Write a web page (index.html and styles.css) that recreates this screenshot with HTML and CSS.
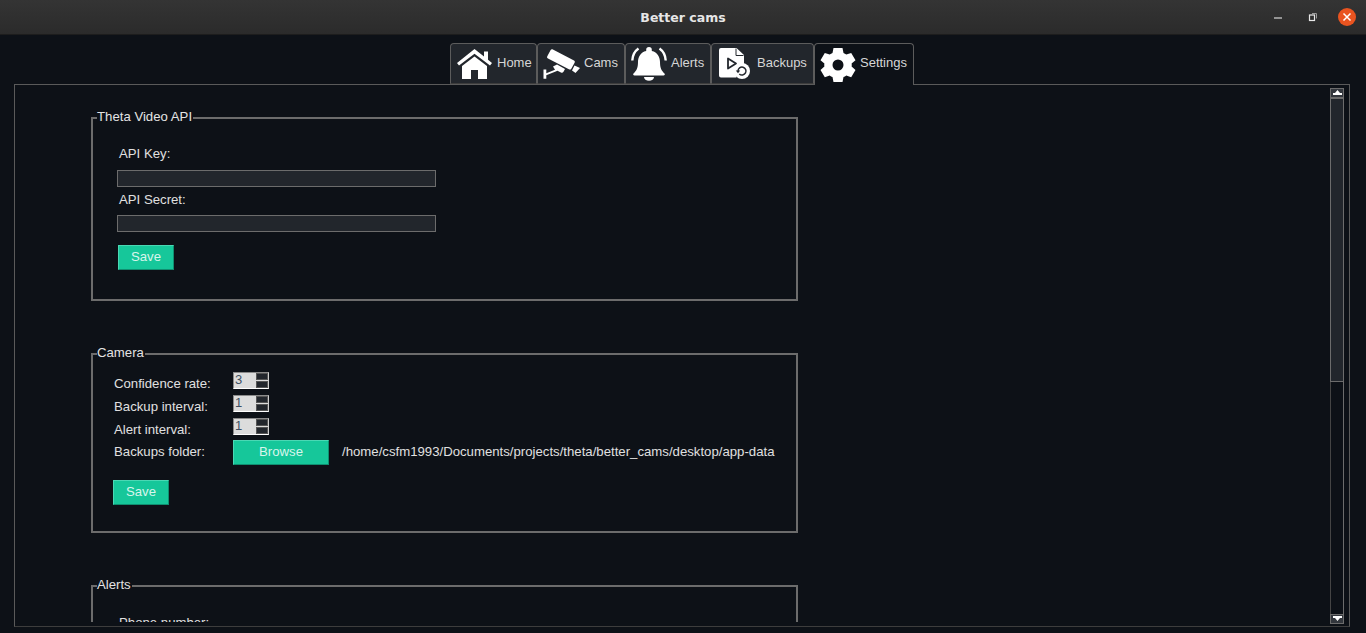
FILE: index.html
```html
<!DOCTYPE html>
<html lang="en">
<head>
<meta charset="utf-8">
<title>Better cams</title>
<link rel="stylesheet" href="styles.css">
</head>
<body>
<header class="titlebar">
  <span class="title">Better cams</span>
  <div class="winctl">
    <svg class="ctl-min" width="10" height="10" viewBox="0 0 10 10"><path d="M1 6h8" stroke="#d8d8d8" stroke-width="1.2"/></svg>
    <svg class="ctl-max" width="10" height="10" viewBox="0 0 10 10"><path d="M4 1.500h4.500v5" fill="none" stroke="#9a9a9a" stroke-width="1"/><rect x="1.500" y="3" width="5" height="5.500" fill="none" stroke="#e8e8e8" stroke-width="1.200"/></svg>
    <span class="ctl-close"><svg width="18" height="18" viewBox="0 0 18 18"><path d="M5.500 5.500l7 7M12.500 5.500l-7 7" stroke="#fff" stroke-width="1.500"/></svg></span>
  </div>
</header>
<main class="app">
  <nav class="tabs">
    <div class="tab tab-home">
      <svg class="ico" width="35" height="32" viewBox="0 0 35 32"><path fill="#fff" d="M17.500 1 27 8.500V3.500h4v8.300L35 15l-2 2.600L17.500 5.800 2 17.600 0 15z"/><path fill="#fff" d="M17.500 8.500 30 18v13H21v-9h-7v9H5V18z"/></svg>
      <span>Home</span>
    </div>
    <div class="tab tab-cams">
      <svg class="ico" width="38" height="32" viewBox="0 0 38 32"><path fill="#fff" d="M7.500 2.200c.6-1 1.500-1.200 2.400-.7L31 12.500c.9.500 1.100 1.300.6 2.200l-3.300 6c-.6 1-1.500 1.100-2.400.6L5 10.500c-1-.5-1.200-1.300-.7-2.200z"/><path fill="#fff" d="M31.500 17.500 37 20 32.500 25 29 22.500z"/><path fill="#fff" d="M.5 21.500h2.800v3.800L12 21.800l-2-3.300 4-2 8 4.500-1.500 2.800c-.6 1-1.500 1.200-2.500.8l-3.500-1.800-11.200 4.500v3.400H.5z"/></svg>
      <span>Cams</span>
    </div>
    <div class="tab tab-alerts">
      <svg class="ico" width="36" height="34" viewBox="0 0 36 34"><path fill="#fff" d="M18 0a2.800 2.800 0 0 1 2.800 2.800v1.100C26.500 5.100 29 10 29 15c0 6 1.500 8.500 4.500 11.500.8.900.2 2-1 2h-29c-1.200 0-1.800-1.100-1-2C5.500 23.500 7 21 7 15c0-5 2.500-9.900 8.200-11.100V2.800A2.800 2.800 0 0 1 18 0z"/><path fill="#fff" d="M13 30h10a5 3.800 0 0 1-10 0z"/><path fill="none" stroke="#fff" stroke-width="2.400" d="M7.500 1.500C4 4 1.500 8.500 1.300 13.500M28.500 1.500C32 4 34.500 8.500 34.700 13.500"/></svg>
      <span>Alerts</span>
    </div>
    <div class="tab tab-backups">
      <svg class="ico" width="32" height="32" viewBox="0 0 32 32"><path fill="#fff" d="M2 0h15.500L25 7v11a8.500 8.500 0 0 0-7.500 11.500H2a2 2 0 0 1-2-2V2a2 2 0 0 1 2-2z"/><path fill="none" stroke="#22262c" stroke-width="1" d="M17 .5v7h7.500"/><path fill="none" stroke="#22262c" stroke-width="1.800" stroke-linejoin="round" d="M9 10.500v10l8-5z"/><circle cx="23" cy="23" r="8" fill="#fff"/><path fill="none" stroke="#22262c" stroke-width="1.500" d="M19 23a4 4 0 1 1 1.300 3"/><path fill="#22262c" d="M16.800 22.500h4.400l-2.200 2.700z"/></svg>
      <span>Backups</span>
    </div>
    <div class="tab tab-settings active">
      <svg class="ico" width="36" height="34" viewBox="0 0 36 34"><path fill="#fff" fill-rule="evenodd" d="M13.500 0h9l1 5c1 .4 1.900.9 2.800 1.600l4.900-1.700 4.300 7.300-3.900 3.300c.2 1.100.2 2.100 0 3.100l3.900 3.300-4.300 7.300-4.900-1.700c-.9.700-1.800 1.200-2.800 1.600l-1 5h-9l-1-5c-1-.4-1.900-.9-2.800-1.600l-4.900 1.700L.5 21.900l3.900-3.300c-.2-1-.2-2 0-3.100L.5 12.200l4.300-7.300 4.900 1.700c.9-.7 1.800-1.200 2.800-1.600zM18 11.500a5.500 5.500 0 1 0 0 11 5.500 5.500 0 0 0 0-11z"/></svg>
      <span>Settings</span>
    </div>
  </nav>
  <section class="panel">
    <div class="scroll-content">
      <fieldset class="group group-api">
        <legend>Theta Video API</legend>
        <div class="group-body">
          <label class="stack-label">API Key:</label>
          <div class="text-input"></div>
          <label class="stack-label second">API Secret:</label>
          <div class="text-input"></div>
          <button class="btn btn-save">Save</button>
        </div>
      </fieldset>
      <fieldset class="group group-camera">
        <legend>Camera</legend>
        <div class="group-body">
          <div class="form-row"><span class="row-label">Confidence rate:</span><span class="spin"><span class="spin-val">3</span><span class="spin-btns"><i></i><i></i></span></span></div>
          <div class="form-row"><span class="row-label">Backup interval:</span><span class="spin"><span class="spin-val">1</span><span class="spin-btns"><i></i><i></i></span></span></div>
          <div class="form-row"><span class="row-label">Alert interval:</span><span class="spin"><span class="spin-val">1</span><span class="spin-btns"><i></i><i></i></span></span></div>
          <div class="form-row row-folder"><span class="row-label">Backups folder:</span><button class="btn btn-browse">Browse</button><span class="path">/home/csfm1993/Documents/projects/theta/better_cams/desktop/app-data</span></div>
          <button class="btn btn-save btn-save-cam">Save</button>
        </div>
      </fieldset>
      <fieldset class="group group-alerts">
        <legend>Alerts</legend>
        <div class="group-body">
          <label class="stack-label">Phone number:</label>
        </div>
      </fieldset>
    </div>
    <div class="scrollbar">
      <div class="sb-btn"><svg width="9" height="6" viewBox="0 0 9 6"><path fill="#fff" d="M4.500 0 7 3h2v2H0V3h2z"/></svg></div>
      <div class="sb-thumb"></div>
      <div class="sb-track"></div>
      <div class="sb-btn"><svg width="9" height="6" viewBox="0 0 9 6"><path fill="#fff" d="M0 0h9v2H7L4.500 5 2 2H0z"/></svg></div>
    </div>
  </section>
</main>
</body>
</html>
```

FILE: styles.css
```css
* { box-sizing: border-box; }
html, body { margin: 0; height: 100%; overflow: hidden; }
body {
  background: #0d1117;
  color: #e4e4e4;
  font-family: "Liberation Sans", Arial, sans-serif;
  font-size: 13.2px;
  width: 1366px;
  height: 633px;
  display: flex;
  flex-direction: column;
}
.titlebar {
  height: 35px;
  flex: none;
  background: linear-gradient(#343434, #2b2b2b);
  border-bottom: 1px solid #1d1d1d;
  display: flex;
  align-items: center;
  justify-content: center;
  position: relative;
}
.title {
  font-family: "DejaVu Sans", sans-serif;
  font-weight: 700;
  font-size: 12.5px;
  color: #e6e6e6;
}
.winctl {
  position: absolute;
  right: 10px;
  top: 8px;
  display: flex;
  align-items: center;
}
.ctl-min { margin-right: 25px; }
.ctl-max { margin-right: 20px; }
.ctl-close {
  width: 18px;
  height: 18px;
  border-radius: 50%;
  background: #e95420;
  display: block;
}
.ctl-close svg { display: block; }
.app {
  flex: 1;
  min-height: 0;
  display: flex;
  flex-direction: column;
  padding: 8px 16px 6px 14px;
}
.tabs {
  height: 41px;
  flex: none;
  display: flex;
  padding-left: 436px;
  position: relative;
  z-index: 1;
}
.tab {
  height: 41px;
  display: flex;
  align-items: center;
  background: #22262c;
  border: 1px solid #5c5c5c;
  border-bottom: 1px solid #3c3c3c;
  border-radius: 4px 4px 0 0;
  color: #d6d6d6;
  font-size: 13px;
}
.tab span { margin-bottom: 2px; }
.tab .ico { flex: none; }
.tab-home { width: 87px; padding-left: 6px; gap: 5px; }
.tab-cams { width: 88px; padding-left: 5px; gap: 3px; }
.tab-alerts { width: 86px; padding-left: 5px; gap: 4px; }
.tab-backups { width: 103px; padding-left: 7px; gap: 6px; }
.tab-settings { width: 100px; padding-left: 5px; gap: 4px; }
.tab.active {
  background: #0d1117;
  height: 42px;
  border-bottom: 0;
}
.tab.active span { margin-bottom: 4px; }
.panel {
  flex: 1;
  min-height: 0;
  display: flex;
  border: 1px solid #5a5a5a;
  border-bottom-color: #3d3d3d;
  overflow: hidden;
}
.scroll-content {
  flex: 1;
  min-width: 0;
  overflow: hidden;
  padding: 24px 0 0 76px;
  margin-bottom: 4px;
}
.group {
  width: 707px;
  margin: 0 0 44px;
  padding: 0;
  border: 2px solid #6c6c6c;
  min-inline-size: 0;
}
.group legend {
  margin-left: 4px;
  padding: 0 1px 2px 0;
  font-size: 13.2px;
  line-height: 15px;
  color: #e4e4e4;
}
.group-api { height: 192px; }
.group-camera { height: 188px; }
.group-alerts { height: 60px; }
.group-api .group-body { padding: 20px 0 0 24px; }
.group-camera .group-body { padding: 10px 0 0 21px; }
.group-alerts .group-body { padding: 21px 0 0 24px; }
.stack-label {
  display: block;
  height: 15px;
  line-height: 15px;
  margin-left: 2px;
  margin-bottom: 9px;
  color: #e0e0e0;
}
.stack-label.second { margin-top: 5px; margin-bottom: 8px; }
.text-input {
  width: 319px;
  height: 17px;
  background: #22262c;
  border: 1px solid #6c6c6c;
  margin-bottom: 4px;
}
.btn {
  display: block;
  font: inherit;
  color: #d8f5ec;
  background: #16c79a;
  border: 0;
  border-bottom: 1px solid #0f8f70;
  border-right: 1px solid #0f8f70;
  border-top: 1px solid #4ad8b4;
  border-left: 1px solid #4ad8b4;
  padding: 0 0 3px;
  text-align: center;
}
.btn-save {
  width: 56px;
  height: 25px;
  margin: 13px 0 0 1px;
}
.btn-save-cam { margin: 15px 0 0 -1px; }
.form-row {
  height: 17px;
  margin-bottom: 6px;
  display: flex;
  align-items: center;
}
.row-label {
  width: 119px;
  flex: none;
  position: relative;
  top: 3px;
  color: #e0e0e0;
}
.spin {
  width: 36px;
  height: 17px;
  flex: none;
  display: flex;
  background: #dcdcdc;
  border: 1px solid #8a8a8a;
  border-bottom-color: #ffffff;
  border-right-color: #d0d0d0;
}
.spin-val {
  flex: 1;
  color: #3f5063;
  font-size: 13px;
  line-height: 13px;
  padding-left: 1px;
}
.spin-btns {
  width: 12px;
  flex: none;
  display: flex;
  flex-direction: column;
  gap: 1px;
}
.spin-btns i {
  flex: 1;
  display: block;
  background: #22262c;
  border: 1px solid #555;
}
.row-folder {
  height: 25px;
  margin-top: -1px;
  margin-bottom: 0;
}
.row-folder .row-label { top: -1px; }
.btn-browse {
  width: 96px;
  height: 25px;
  flex: none;
}
.path {
  margin-left: 13px;
  white-space: nowrap;
  color: #e0e0e0;
  position: relative;
  top: -1px;
}
.scrollbar {
  width: 14px;
  flex: none;
  margin: 3px 5px 2px 0;
  display: flex;
  flex-direction: column;
  align-items: stretch;
  border-left: 1px solid #444;
  border-right: 1px solid #6c6c6c;
}
.sb-btn {
  height: 10px;
  flex: none;
  background: #33373d;
  border: 1px solid #6c6c6c;
  margin: 0 -1px;
  display: flex;
  align-items: center;
  justify-content: center;
}
.sb-thumb {
  height: 284px;
  flex: none;
  background: #22262c;
  border: 1px solid #6c6c6c;
  margin: 0 -1px;
}
.sb-track { flex: 1; }
```
